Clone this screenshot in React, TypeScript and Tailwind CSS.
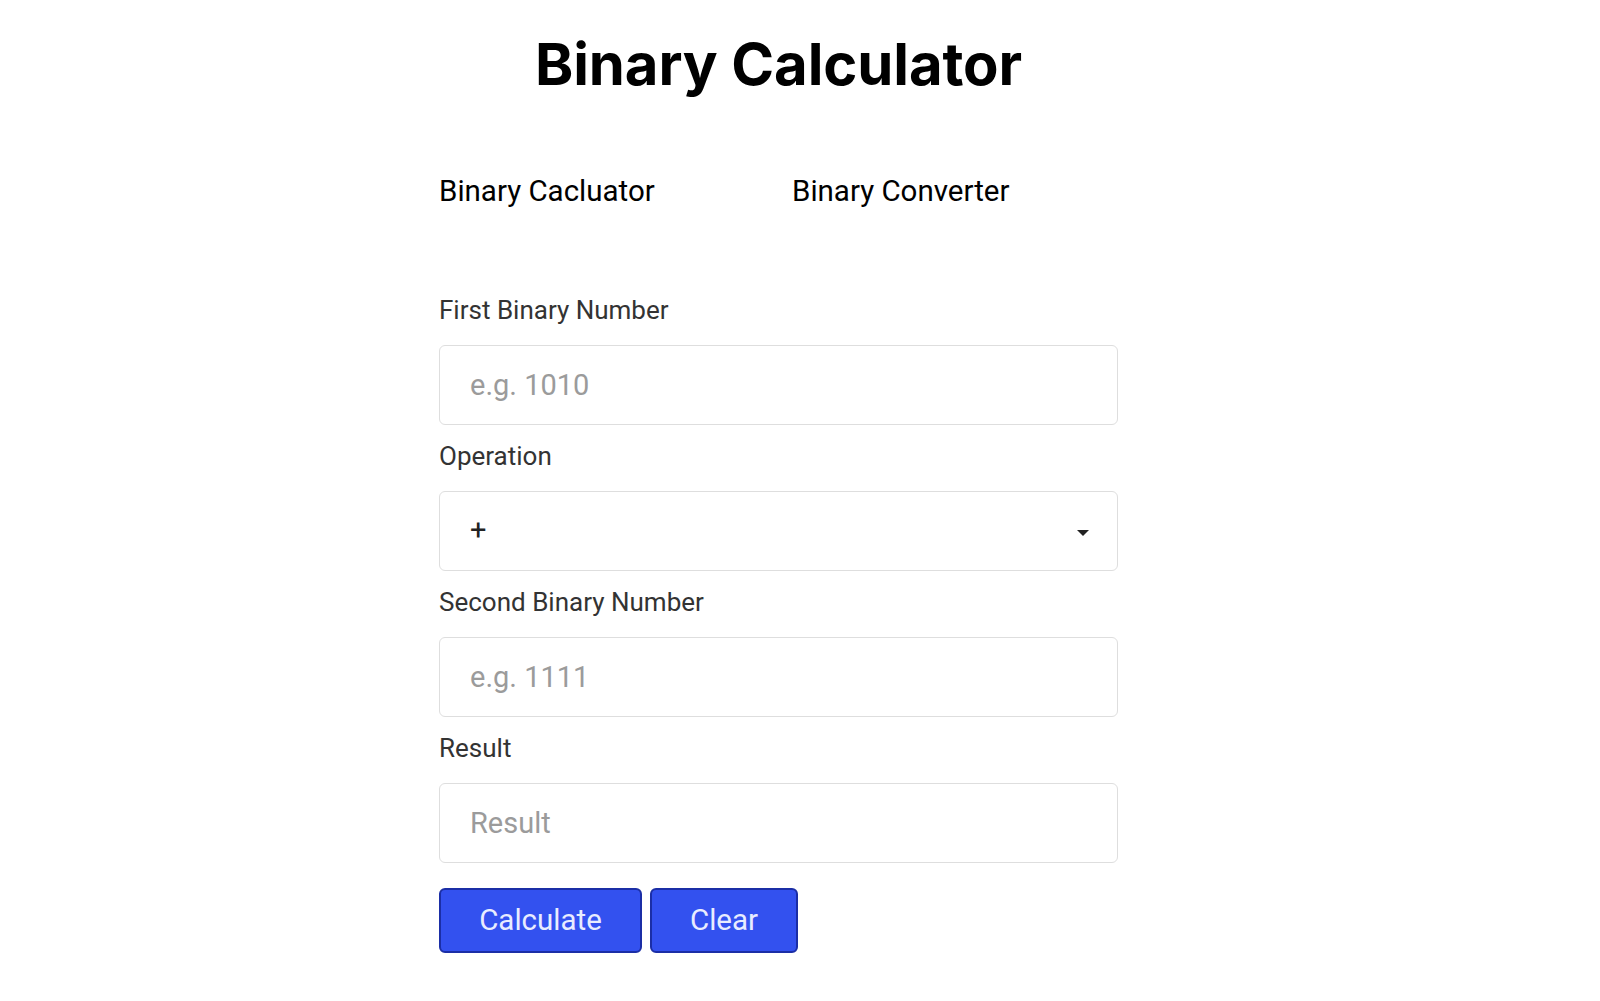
import React from "react";

function Field({ label, placeholder }: { label: string; placeholder: string }) {
  return (
    <div className="flex flex-col">
      <label className="h-[30px] leading-[30px] text-[26px] text-[#333333] mb-[20px]">{label}</label>
      <input
        placeholder={placeholder}
        className="h-[80px] w-full rounded-[6px] border border-[#dedede] bg-white px-[30px] text-[29px] text-[#222] placeholder:text-[#9b9b9b] outline-none"
      />
    </div>
  );
}

export default function App() {
  return (
    <div className="min-h-screen bg-white font-['Roboto',sans-serif] text-black">
      <div className="flex justify-center pr-[43px]">
        <div className="w-[679px] flex flex-col">
          <h1 className="mt-[29px] h-[70px] leading-[70px] text-center text-[58px] font-bold font-['Inter',sans-serif] tracking-[-0.1px]">
            Binary Calculator
          </h1>
          <div className="mt-[75px] flex h-[34px] items-center text-[29.5px] leading-[34px]">
            <button className="w-[353px] text-left">Binary Cacluator</button>
            <button className="text-left">Binary Converter</button>
          </div>
          <div className="mt-[87px] flex flex-col gap-[16px]">
            <Field label="First Binary Number" placeholder="e.g. 1010" />
            <div className="flex flex-col">
              <label className="h-[30px] leading-[30px] text-[26px] text-[#333333] mb-[20px]">Operation</label>
              <div className="h-[80px] w-full rounded-[6px] border border-[#dedede] bg-white px-[30px] flex items-center justify-between">
                <span className="text-[29px] text-[#222]">+</span>
                <svg width="12" height="6" viewBox="0 0 12 6" className="mr-[-2px] mt-[3px]">
                  <path d="M0 0 L12 0 L6 6 Z" fill="#222" />
                </svg>
              </div>
            </div>
            <Field label="Second Binary Number" placeholder="e.g. 1111" />
            <Field label="Result" placeholder="Result" />
          </div>
          <div className="mt-[25px] flex gap-[8px]">
            <button className="h-[65px] w-[203px] rounded-[6px] border-2 border-[#1b2ea6] bg-[#3351ef] text-[29.5px] text-[#e8ecff]">
              Calculate
            </button>
            <button className="h-[65px] w-[148px] rounded-[6px] border-2 border-[#1b2ea6] bg-[#3351ef] text-[29.5px] text-[#e8ecff]">
              Clear
            </button>
          </div>
        </div>
      </div>
    </div>
  );
}
